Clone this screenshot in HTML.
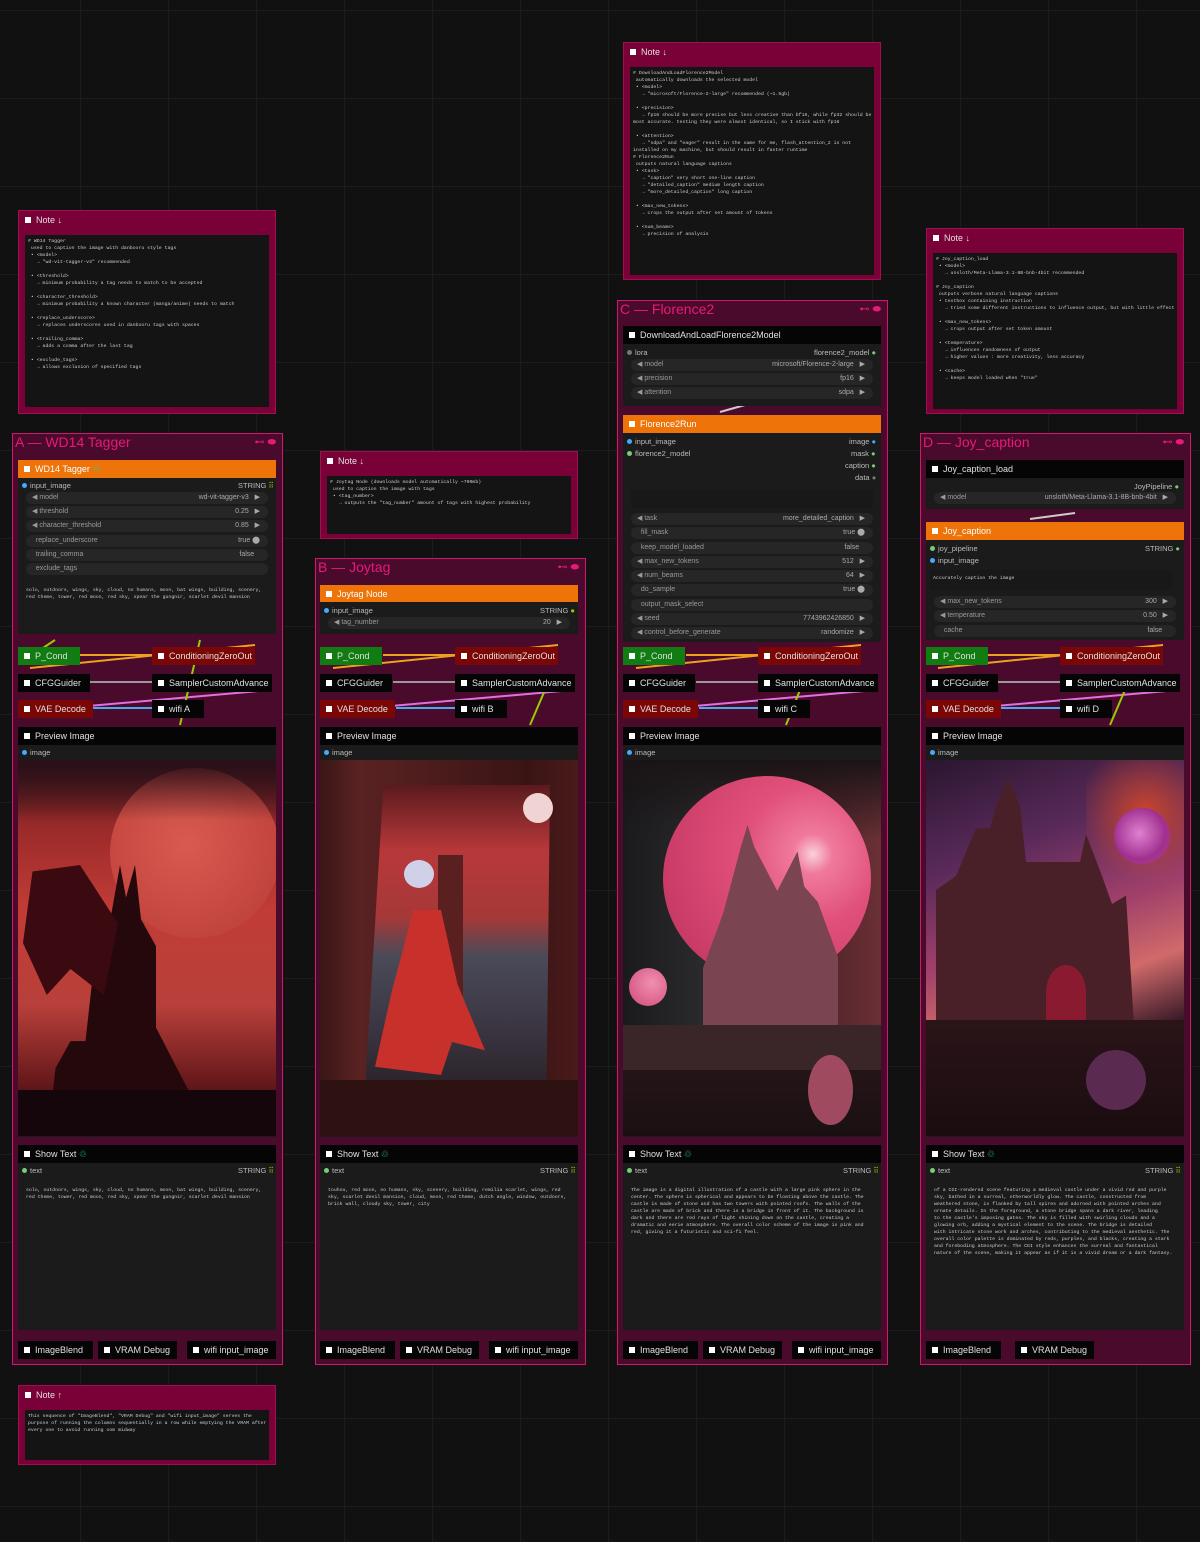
<!DOCTYPE html>
<html><head><meta charset="utf-8"><style>
body{margin:0;width:1200px;height:1542px;position:relative;overflow:hidden;background:#111;
background-image:linear-gradient(#1c1c1c 1px,transparent 1px),linear-gradient(90deg,#1c1c1c 1px,transparent 1px);background-size:88px 88px;background-position:-8px 10px;font-family:"Liberation Sans",sans-serif}
div,span{box-sizing:border-box}
.a{position:absolute}
.g{position:absolute;background:#4a0a2b;border:1px solid #d3176d}
.gt{position:absolute;left:2px;top:0;color:#e8197a;font-size:14px;white-space:nowrap}
.gi{position:absolute;right:6px;top:3px;color:#e8197a;font-size:10px}
.h{position:absolute;height:18px;background:#050505;color:#e0e0e0;font-size:9px;line-height:18px;padding-left:17px;white-space:nowrap;overflow:hidden}
.h:before{content:"";position:absolute;left:6px;top:6px;width:6px;height:6px;background:#fff}
.o{background:#ee7309;color:#fff}
.gr{background:#117c11}
.rd{background:#7a0606}
.b{position:absolute;background:#1b1b1b}
.w{position:absolute;height:12px;background:#262626;border-radius:6px;font-size:7px;color:#9a9a9a;line-height:12px;padding:0 8px 0 6px;white-space:nowrap}
.w i{font-style:normal;float:right;color:#aaa}
.l{position:absolute;font-size:7.5px;color:#bbb;white-space:nowrap}
.m{position:absolute;font-family:"Liberation Mono",monospace;font-size:4.85px;line-height:7px;color:#ccc;white-space:pre}
.n{position:absolute;background:#7a0038;border:1px solid #a01050}
.nb{position:absolute;background:#141414;overflow:hidden}
.img{position:absolute;overflow:hidden}
.dot{display:inline-block;width:5px;height:5px;border-radius:50%;background:#7c7;margin-right:3px}
</style></head><body>

<!-- NOTES -->
<div class="n" style="left:18px;top:210px;width:258px;height:204px"><div class="h" style="background:transparent;left:0;top:0;width:200px">Note ↓</div>
<div class="nb" style="left:6px;top:24px;width:244px;height:172px"><div class="m" style="left:3px;top:3px"># WD14 Tagger
 used to caption the image with danbooru style tags
 • &lt;model&gt;
   → "wd-vit-tagger-v3" recommended

 • &lt;threshold&gt;
   → minimum probability a tag needs to match to be accepted

 • &lt;character_threshold&gt;
   → minimum probability a known character (manga/anime) needs to match

 • &lt;replace_underscore&gt;
   → replaces underscores used in danbooru tags with spaces

 • &lt;trailing_comma&gt;
   → adds a comma after the last tag

 • &lt;exclude_tags&gt;
   → allows exclusion of specified tags</div></div></div>

<div class="n" style="left:320px;top:451px;width:258px;height:88px"><div class="h" style="background:transparent;left:0;top:0;width:200px">Note ↓</div>
<div class="nb" style="left:6px;top:24px;width:244px;height:58px"><div class="m" style="left:3px;top:3px"># Joytag Node (downloads model automatically ~700mb)
 used to caption the image with tags
 • &lt;tag_number&gt;
   → outputs the "tag_number" amount of tags with highest probability</div></div></div>

<div class="n" style="left:623px;top:42px;width:258px;height:238px"><div class="h" style="background:transparent;left:0;top:0;width:200px">Note ↓</div>
<div class="nb" style="left:6px;top:24px;width:244px;height:208px"><div class="m" style="left:3px;top:3px"># DownloadAndLoadFlorence2Model
 automatically downloads the selected model
 • &lt;model&gt;
   → "microsoft/Florence-2-large" recommended (~1.5gb)

 • &lt;precision&gt;
   → fp16 should be more precise but less creative than bf16, while fp32 should be
most accurate. testing they were almost identical, so I stick with fp16

 • &lt;attention&gt;
   → "sdpa" and "eager" result in the same for me, flash_attention_2 is not
installed on my machine, but should result in faster runtime
# Florence2Run
 outputs natural language captions
 • &lt;task&gt;
   → "caption" very short one-line caption
   → "detailed_caption" medium length caption
   → "more_detailed_caption" long caption

 • &lt;max_new_tokens&gt;
   → crops the output after set amount of tokens

 • &lt;num_beams&gt;
   → precision of analysis</div></div></div>

<div class="n" style="left:926px;top:228px;width:258px;height:186px"><div class="h" style="background:transparent;left:0;top:0;width:200px">Note ↓</div>
<div class="nb" style="left:6px;top:24px;width:244px;height:156px"><div class="m" style="left:3px;top:3px"># Joy_caption_load
 • &lt;model&gt;
   → unsloth/Meta-Llama-3.1-8B-bnb-4bit recommended

# Joy_caption
 outputs verbose natural language captions
 • textbox containing instruction
   → tried some different instructions to influence output, but with little effect

 • &lt;max_new_tokens&gt;
   → crops output after set token amount

 • &lt;temperature&gt;
   → influences randomness of output
   → higher values : more creativity, less accuracy

 • &lt;cache&gt;
   → keeps model loaded when "true"</div></div></div>

<div class="n" style="left:18px;top:1385px;width:258px;height:80px"><div class="h" style="background:transparent;left:0;top:0;width:200px">Note ↑</div>
<div class="nb" style="left:6px;top:24px;width:244px;height:50px"><div class="m" style="left:3px;top:3px">This sequence of "ImageBlend", "VRAM Debug" and "wifi input_image" serves the
purpose of running the columns sequentially in a row while emptying the VRAM after
every one to avoid running oom midway</div></div></div>

<!-- GROUPS -->
<div class="g" style="left:12px;top:433px;width:271px;height:932px"><div class="gt">A — WD14 Tagger</div><div class="gi">⊷ ⬬</div></div>
<div class="g" style="left:315px;top:558px;width:271px;height:807px"><div class="gt">B — Joytag</div><div class="gi">⊷ ⬬</div></div>
<div class="g" style="left:617px;top:300px;width:271px;height:1065px"><div class="gt">C — Florence2</div><div class="gi">⊷ ⬬</div></div>
<div class="g" style="left:920px;top:433px;width:271px;height:932px"><div class="gt">D — Joy_caption</div><div class="gi">⊷ ⬬</div></div>

<!-- wires -->
<svg class="a" style="left:0;top:0" width="1200" height="1542">
<g stroke-width="2" fill="none">
<path d="M80 655 L152 655" stroke="#f0a020"/><path d="M30 668 L255 645" stroke="#f0a020"/>
<path d="M90 682 L152 682" stroke="#999"/><path d="M93 708 L152 708" stroke="#4aaaf0"/><path d="M20 712 L270 690" stroke="#e070e0"/>
<path d="M40 650 L55 640" stroke="#9c0"/><path d="M180 725 L200 640" stroke="#9c0"/>
<path d="M383 655 L455 655" stroke="#f0a020"/><path d="M333 668 L558 645" stroke="#f0a020"/>
<path d="M393 682 L455 682" stroke="#999"/><path d="M396 708 L455 708" stroke="#4aaaf0"/><path d="M323 712 L573 690" stroke="#e070e0"/>
<path d="M530 725 L545 690" stroke="#9c0"/>
<path d="M686 655 L758 655" stroke="#f0a020"/><path d="M636 668 L861 645" stroke="#f0a020"/>
<path d="M696 682 L758 682" stroke="#999"/><path d="M699 708 L758 708" stroke="#4aaaf0"/><path d="M626 712 L876 690" stroke="#e070e0"/>
<path d="M786 725 L800 690" stroke="#9c0"/><path d="M720 412 L745 405" stroke="#ccc"/>
<path d="M988 655 L1060 655" stroke="#f0a020"/><path d="M938 668 L1163 645" stroke="#f0a020"/>
<path d="M998 682 L1060 682" stroke="#999"/><path d="M1001 708 L1060 708" stroke="#4aaaf0"/><path d="M928 712 L1178 690" stroke="#e070e0"/>
<path d="M1110 725 L1125 690" stroke="#9c0"/><path d="M1030 519 L1075 513" stroke="#ccc"/>
</g></svg>

<!-- A specific -->
<div class="h o" style="left:18px;top:460px;width:258px">WD14 Tagger <span style="color:#3c9">♲</span></div>
<div class="b" style="left:18px;top:478px;width:258px;height:156px"></div>
<div class="l" style="left:22px;top:481px"><span class="dot" style="background:#4af"></span>input_image</div><div class="l" style="left:238px;top:481px">STRING <span style="color:#9c0">⠿</span></div>
<div class="w" style="left:26px;top:492px;width:242px">◀ model<i>wd-vit-tagger-v3 &nbsp; ▶</i></div>
<div class="w" style="left:26px;top:506px;width:242px">◀ threshold<i>0.25 &nbsp; ▶</i></div>
<div class="w" style="left:26px;top:520px;width:242px">◀ character_threshold<i>0.85 &nbsp; ▶</i></div>
<div class="w" style="left:26px;top:535px;width:242px">&nbsp; replace_underscore<i>true ⬤</i></div>
<div class="w" style="left:26px;top:549px;width:242px">&nbsp; trailing_comma<i>false &nbsp;&nbsp;</i></div>
<div class="w" style="left:26px;top:563px;width:242px">&nbsp; exclude_tags</div>
<div class="m" style="left:26px;top:587px">solo, outdoors, wings, sky, cloud, no humans, moon, bat wings, building, scenery,
red theme, tower, red moon, red sky, spear the gungnir, scarlet devil mansion</div>

<!-- B specific -->
<div class="h o" style="left:320px;top:585px;width:258px">Joytag Node</div>
<div class="b" style="left:320px;top:602px;width:258px;height:32px"></div>
<div class="l" style="left:324px;top:606px"><span class="dot" style="background:#4af"></span>input_image</div><div class="l" style="left:540px;top:606px">STRING <span style="color:#9c0">●</span></div>
<div class="w" style="left:328px;top:617px;width:242px">◀ tag_number<i>20 &nbsp; ▶</i></div>

<!-- C specific -->
<div class="h" style="left:623px;top:326px;width:258px">DownloadAndLoadFlorence2Model</div>
<div class="b" style="left:623px;top:344px;width:258px;height:62px"></div>
<div class="l" style="left:627px;top:348px"><span class="dot" style="background:#777"></span>lora</div><div class="l" style="left:814px;top:348px">florence2_model <span style="color:#7c7">●</span></div>
<div class="w" style="left:631px;top:359px;width:242px">◀ model<i>microsoft/Florence-2-large &nbsp; ▶</i></div>
<div class="w" style="left:631px;top:373px;width:242px">◀ precision<i>fp16 &nbsp; ▶</i></div>
<div class="w" style="left:631px;top:387px;width:242px">◀ attention<i>sdpa &nbsp; ▶</i></div>
<div class="h o" style="left:623px;top:415px;width:258px">Florence2Run</div>
<div class="b" style="left:623px;top:433px;width:258px;height:209px"></div>
<div class="l" style="left:627px;top:437px"><span class="dot" style="background:#4af"></span>input_image</div><div class="l" style="left:849px;top:437px">image <span style="color:#4af">●</span></div>
<div class="l" style="left:627px;top:449px"><span class="dot"></span>florence2_model</div><div class="l" style="left:851px;top:449px">mask <span style="color:#7c7">●</span></div>
<div class="l" style="left:845px;top:461px">caption <span style="color:#7c7">●</span></div>
<div class="l" style="left:855px;top:473px">data <span style="color:#777">●</span></div>
<div class="a" style="left:631px;top:490px;width:242px;height:18px;background:#181818"></div>
<div class="w" style="left:631px;top:513px;width:242px">◀ task<i>more_detailed_caption &nbsp; ▶</i></div>
<div class="w" style="left:631px;top:527px;width:242px">&nbsp; fill_mask<i>true ⬤</i></div>
<div class="w" style="left:631px;top:542px;width:242px">&nbsp; keep_model_loaded<i>false &nbsp;&nbsp;</i></div>
<div class="w" style="left:631px;top:556px;width:242px">◀ max_new_tokens<i>512 &nbsp; ▶</i></div>
<div class="w" style="left:631px;top:570px;width:242px">◀ num_beams<i>64 &nbsp; ▶</i></div>
<div class="w" style="left:631px;top:584px;width:242px">&nbsp; do_sample<i>true ⬤</i></div>
<div class="w" style="left:631px;top:599px;width:242px">&nbsp; output_mask_select</div>
<div class="w" style="left:631px;top:613px;width:242px">◀ seed<i>7743962426850 &nbsp; ▶</i></div>
<div class="w" style="left:631px;top:627px;width:242px">◀ control_before_generate<i>randomize &nbsp; ▶</i></div>

<!-- D specific -->
<div class="h" style="left:926px;top:460px;width:258px">Joy_caption_load</div>
<div class="b" style="left:926px;top:478px;width:258px;height:31px"></div>
<div class="l" style="left:1134px;top:482px">JoyPipeline <span style="color:#7c7">●</span></div>
<div class="w" style="left:934px;top:492px;width:242px">◀ model<i>unsloth/Meta-Llama-3.1-8B-bnb-4bit &nbsp; ▶</i></div>
<div class="h o" style="left:926px;top:522px;width:258px">Joy_caption</div>
<div class="b" style="left:926px;top:540px;width:258px;height:100px"></div>
<div class="l" style="left:930px;top:544px"><span class="dot"></span>joy_pipeline</div><div class="l" style="left:1145px;top:544px">STRING <span style="color:#7c7">●</span></div>
<div class="l" style="left:930px;top:556px"><span class="dot" style="background:#4af"></span>input_image</div>
<div class="a" style="left:930px;top:570px;width:242px;height:20px;background:#181818"></div>
<div class="m" style="left:933px;top:575px">Accurately caption the image</div>
<div class="w" style="left:934px;top:596px;width:242px">◀ max_new_tokens<i>300 &nbsp; ▶</i></div>
<div class="w" style="left:934px;top:610px;width:242px">◀ temperature<i>0.50 &nbsp; ▶</i></div>
<div class="w" style="left:934px;top:625px;width:242px">&nbsp; cache<i>false &nbsp;&nbsp;</i></div>

<!-- A -->
<div class="h gr" style="left:18px;top:647px;width:62px">P_Cond</div>
<div class="h rd" style="left:152px;top:647px;width:103px">ConditioningZeroOut</div>
<div class="h" style="left:18px;top:674px;width:72px">CFGGuider</div>
<div class="h" style="left:152px;top:674px;width:120px">SamplerCustomAdvance</div>
<div class="h rd" style="left:18px;top:700px;width:75px">VAE Decode</div>
<div class="h" style="left:152px;top:700px;width:52px">wifi A</div>
<div class="h" style="left:18px;top:727px;width:258px">Preview Image</div>
<div class="b" style="left:18px;top:745px;width:258px;height:392px"></div>
<div class="l" style="left:22px;top:748px"><span class="dot" style="background:#4af"></span>image</div>
<div class="img" style="left:18px;top:760px;width:258px;height:376px;background:linear-gradient(#3a1418 0%,#9a2a2a 18%,#c23c36 40%,#b8403a 65%,#6a1a1c 85%,#1a0608 100%)">
<div class="a" style="left:92px;top:8px;width:170px;height:170px;border-radius:50%;background:radial-gradient(circle at 45% 45%,#d85a50,#c2443e 70%,#b0383280)"></div>
<div class="a" style="left:0;top:0;width:258px;height:60px;background:linear-gradient(#2a1018,transparent)"></div>
<div class="a" style="left:30px;top:105px;width:150px;height:271px;background:#24080c;clip-path:polygon(48% 0,52% 12%,58% 0,62% 20%,72% 30%,72% 60%,100% 90%,100% 100%,0 100%,5% 75%,15% 65%,25% 65%,30% 40%,40% 25%)"></div>
<div class="a" style="left:5px;top:105px;width:95px;height:130px;background:#3a0a10;clip-path:polygon(10% 5%,60% 0,100% 45%,85% 100%,50% 80%,25% 100%,0 60%)"></div>
<div class="a" style="left:0;top:330px;width:258px;height:46px;background:#14060a"></div></div>
<div class="h" style="left:18px;top:1145px;width:258px">Show Text <span style="color:#3c9">♲</span></div>
<div class="b" style="left:18px;top:1163px;width:258px;height:167px"></div>
<div class="l" style="left:22px;top:1166px"><span class="dot"></span>text</div><div class="l" style="left:238px;top:1166px">STRING <span style="color:#9c0">⠿</span></div>
<div class="m" style="left:26px;top:1187px">solo, outdoors, wings, sky, cloud, no humans, moon, bat wings, building, scenery,
red theme, tower, red moon, red sky, spear the gungnir, scarlet devil mansion</div>
<div class="h" style="left:18px;top:1341px;width:75px">ImageBlend</div>
<div class="h" style="left:98px;top:1341px;width:79px">VRAM Debug</div>
<div class="h" style="left:187px;top:1341px;width:89px">wifi input_image</div>

<!-- B -->
<div class="h gr" style="left:320px;top:647px;width:62px">P_Cond</div>
<div class="h rd" style="left:455px;top:647px;width:103px">ConditioningZeroOut</div>
<div class="h" style="left:320px;top:674px;width:72px">CFGGuider</div>
<div class="h" style="left:455px;top:674px;width:120px">SamplerCustomAdvance</div>
<div class="h rd" style="left:320px;top:700px;width:75px">VAE Decode</div>
<div class="h" style="left:455px;top:700px;width:52px">wifi B</div>
<div class="h" style="left:320px;top:727px;width:258px">Preview Image</div>
<div class="b" style="left:320px;top:745px;width:258px;height:392px"></div>
<div class="l" style="left:324px;top:748px"><span class="dot" style="background:#4af"></span>image</div>
<div class="img" style="left:320px;top:760px;width:258px;height:376px;background:linear-gradient(90deg,#3a1616,#5a2222 15%,#3a1414 80%,#4a1a1a)">
<div class="a" style="left:45px;top:25px;width:185px;height:330px;background:linear-gradient(#5a1a1e,#b8383a 20%,#a63838 40%,#4a4a58 52%,#3a3440 75%,#221a1e 100%);clip-path:polygon(10% 0,100% 0,98% 100%,0 92%)"></div>
<div class="a" style="left:203px;top:33px;width:30px;height:30px;border-radius:50%;background:#f0d4d4"></div>
<div class="a" style="left:118px;top:95px;width:25px;height:160px;background:#5a2020"></div>
<div class="a" style="left:55px;top:150px;width:110px;height:165px;background:#c8302c;clip-path:polygon(35% 0,60% 0,75% 45%,100% 85%,70% 80%,60% 100%,0 95%,15% 50%)"></div>
<div class="a" style="left:84px;top:100px;width:30px;height:28px;border-radius:50%;background:#d0d0e8"></div>
<div class="a" style="left:0;top:320px;width:258px;height:56px;background:#2e1212"></div></div>
<div class="h" style="left:320px;top:1145px;width:258px">Show Text <span style="color:#3c9">♲</span></div>
<div class="b" style="left:320px;top:1163px;width:258px;height:167px"></div>
<div class="l" style="left:324px;top:1166px"><span class="dot"></span>text</div><div class="l" style="left:540px;top:1166px">STRING <span style="color:#9c0">⠿</span></div>
<div class="m" style="left:328px;top:1187px">touhou, red moon, no humans, sky, scenery, building, remilia scarlet, wings, red
sky, scarlet devil mansion, cloud, moon, red theme, dutch angle, window, outdoors,
brick wall, cloudy sky, tower, city</div>
<div class="h" style="left:320px;top:1341px;width:75px">ImageBlend</div>
<div class="h" style="left:400px;top:1341px;width:79px">VRAM Debug</div>
<div class="h" style="left:489px;top:1341px;width:89px">wifi input_image</div>

<!-- C -->
<div class="h gr" style="left:623px;top:647px;width:62px">P_Cond</div>
<div class="h rd" style="left:758px;top:647px;width:103px">ConditioningZeroOut</div>
<div class="h" style="left:623px;top:674px;width:72px">CFGGuider</div>
<div class="h" style="left:758px;top:674px;width:120px">SamplerCustomAdvance</div>
<div class="h rd" style="left:623px;top:700px;width:75px">VAE Decode</div>
<div class="h" style="left:758px;top:700px;width:52px">wifi C</div>
<div class="h" style="left:623px;top:727px;width:258px">Preview Image</div>
<div class="b" style="left:623px;top:745px;width:258px;height:392px"></div>
<div class="l" style="left:627px;top:748px"><span class="dot" style="background:#4af"></span>image</div>
<div class="img" style="left:623px;top:760px;width:258px;height:376px;background:linear-gradient(90deg,#1a1a1c,#2a2a2c 30%,#4a2024 70%,#6a3036)">
<div class="a" style="left:0;top:0;width:258px;height:80px;background:linear-gradient(#1a1416,transparent)"></div>
<div class="a" style="left:40px;top:16px;width:208px;height:205px;border-radius:50%;background:radial-gradient(circle at 72% 38%,#fbd0dc 0,#f07a9c 10%,#e0507a 35%,#c83a66 80%)"></div>
<div class="a" style="left:80px;top:65px;width:135px;height:220px;background:#7a4450;clip-path:polygon(28% 10%,33% 0,38% 10%,55% 30%,70% 12%,75% 28%,85% 35%,100% 60%,100% 100%,0 100%,0 65%,15% 40%)"></div>
<div class="a" style="left:6px;top:208px;width:38px;height:38px;border-radius:50%;background:radial-gradient(circle at 60% 40%,#f090b0,#d04878)"></div>
<div class="a" style="left:0;top:265px;width:258px;height:50px;background:#3a2628"></div>
<div class="a" style="left:0;top:310px;width:258px;height:66px;background:linear-gradient(#241418,#1a1012)"></div>
<div class="a" style="left:185px;top:295px;width:45px;height:70px;border-radius:50%;background:#a04a60"></div></div>
<div class="h" style="left:623px;top:1145px;width:258px">Show Text <span style="color:#3c9">♲</span></div>
<div class="b" style="left:623px;top:1163px;width:258px;height:167px"></div>
<div class="l" style="left:627px;top:1166px"><span class="dot"></span>text</div><div class="l" style="left:843px;top:1166px">STRING <span style="color:#9c0">⠿</span></div>
<div class="m" style="left:631px;top:1187px">The image is a digital illustration of a castle with a large pink sphere in the
center. The sphere is spherical and appears to be floating above the castle. The
castle is made of stone and has two towers with pointed roofs. The walls of the
castle are made of brick and there is a bridge in front of it. The background is
dark and there are red rays of light shining down on the castle, creating a
dramatic and eerie atmosphere. The overall color scheme of the image is pink and
red, giving it a futuristic and sci-fi feel.</div>
<div class="h" style="left:623px;top:1341px;width:75px">ImageBlend</div>
<div class="h" style="left:703px;top:1341px;width:79px">VRAM Debug</div>
<div class="h" style="left:792px;top:1341px;width:89px">wifi input_image</div>

<!-- D -->
<div class="h gr" style="left:926px;top:647px;width:62px">P_Cond</div>
<div class="h rd" style="left:1060px;top:647px;width:103px">ConditioningZeroOut</div>
<div class="h" style="left:926px;top:674px;width:72px">CFGGuider</div>
<div class="h" style="left:1060px;top:674px;width:120px">SamplerCustomAdvance</div>
<div class="h rd" style="left:926px;top:700px;width:75px">VAE Decode</div>
<div class="h" style="left:1060px;top:700px;width:52px">wifi D</div>
<div class="h" style="left:926px;top:727px;width:258px">Preview Image</div>
<div class="b" style="left:926px;top:745px;width:258px;height:392px"></div>
<div class="l" style="left:930px;top:748px"><span class="dot" style="background:#4af"></span>image</div>
<div class="img" style="left:926px;top:760px;width:258px;height:376px;background:linear-gradient(160deg,#2a1630 0%,#5a2a5a 25%,#a0406a 45%,#d06a6a 60%,#3a1a28 75%,#1a0c14 100%)">
<div class="a" style="left:160px;top:0;width:98px;height:130px;background:radial-gradient(circle at 60% 40%,#c8442c,transparent 70%)"></div>
<div class="a" style="left:188px;top:48px;width:56px;height:56px;border-radius:50%;background:radial-gradient(circle at 45% 45%,#e080d0,#a03090 60%,#c0407a)"></div>
<div class="a" style="left:10px;top:18px;width:200px;height:280px;background:#4a2028;clip-path:polygon(20% 18%,27% 18%,30% 10%,36% 0,42% 10%,45% 30%,60% 30%,72% 30%,75% 20%,83% 35%,88% 45%,95% 42%,100% 100%,0 100%,0 40%,10% 35%)"></div>
<div class="a" style="left:120px;top:205px;width:40px;height:55px;border-radius:50% 50% 0 0;background:#8a1a30"></div>
<div class="a" style="left:0;top:260px;width:258px;height:116px;background:linear-gradient(#2a1418,#1a0c10)"></div>
<div class="a" style="left:160px;top:290px;width:60px;height:60px;border-radius:50%;background:#5a2a50"></div></div>
<div class="h" style="left:926px;top:1145px;width:258px">Show Text <span style="color:#3c9">♲</span></div>
<div class="b" style="left:926px;top:1163px;width:258px;height:167px"></div>
<div class="l" style="left:930px;top:1166px"><span class="dot"></span>text</div><div class="l" style="left:1145px;top:1166px">STRING <span style="color:#9c0">⠿</span></div>
<div class="m" style="left:934px;top:1187px">of a CGI-rendered scene featuring a medieval castle under a vivid red and purple
sky, bathed in a surreal, otherworldly glow. The castle, constructed from
weathered stone, is flanked by tall spires and adorned with pointed arches and
ornate details. In the foreground, a stone bridge spans a dark river, leading
to the castle's imposing gates. The sky is filled with swirling clouds and a
glowing orb, adding a mystical element to the scene. The bridge is detailed
with intricate stone work and arches, contributing to the medieval aesthetic. The
overall color palette is dominated by reds, purples, and blacks, creating a stark
and foreboding atmosphere. The CGI style enhances the surreal and fantastical
nature of the scene, making it appear as if it is a vivid dream or a dark fantasy.</div>
<div class="h" style="left:926px;top:1341px;width:75px">ImageBlend</div>
<div class="h" style="left:1015px;top:1341px;width:79px">VRAM Debug</div>

</body></html>
